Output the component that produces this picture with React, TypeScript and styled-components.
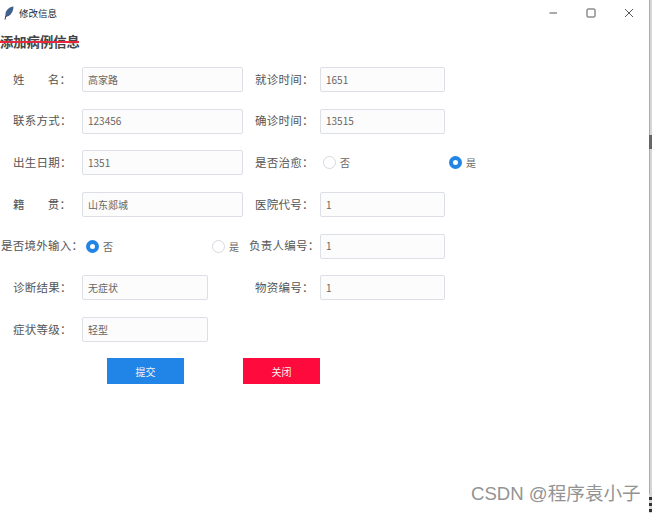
import React from 'react';
import styled, { createGlobalStyle } from 'styled-components';

const Global = createGlobalStyle`
  html, body { margin: 0; padding: 0; background: #fff; }
  body { width: 657px; height: 513px; overflow: hidden; font-family: "Noto Sans CJK SC", "Liberation Sans", sans-serif; }
`;

const Page = styled.div`
  position: relative;
  width: 657px;
  height: 513px;
  display: flex;
  background: #fff;
  overflow: hidden;
`;
const Win = styled.div`
  width: 649px;
  display: flex;
  flex-direction: column;
`;
const Edge = styled.div`
  width: 3px;
  box-sizing: border-box;
  background: #d6d6d6;
  border-left: 1px solid #aaa;
  display: flex;
  flex-direction: column;
  padding-top: 135px;
`;
const EdgeThumb = styled.div`
  height: 14px;
  margin-left: -1px;
  background: #666;
`;
const EdgeFoot = styled.div`
  height: 19px;
  margin-top: auto;
  margin-left: -1px;
  background: repeating-linear-gradient(#d6d6d6 0 3px, #333 3px 6px);
`;
const TitleBar = styled.div`
  height: 26px;
  display: flex;
  align-items: center;
  padding-left: 4px;
  color: #222;
  font-size: 9.5px;
`;
const TitleText = styled.span`
  margin-left: 5px;
`;
const WinButtons = styled.div`
  margin-left: auto;
  display: flex;
  gap: 28px;
  padding-right: 15px;
  align-items: center;
`;
const Heading = styled.div`
  position: relative;
  width: 80px;
  height: 19px;
  margin-top: 6px;
  font-size: 13.3px;
  line-height: 19px;
  font-weight: 700;
  color: #444;
  white-space: nowrap;
`;
const Strike = styled.div`
  position: absolute;
  left: 0;
  top: 9px;
  width: 79px;
  height: 2px;
  background: #e8283c;
`;
const Form = styled.div`
  margin-top: 16px;
  display: flex;
  flex-direction: column;
  gap: 16.7px;
`;
const Row = styled.div`
  display: flex;
  align-items: center;
  height: 25px;
`;
const Label = styled.div<{ $w: number; $pad?: number }>`
  width: ${p => p.$w}px;
  padding-left: ${p => p.$pad ?? 0}px;
  padding-bottom: 2px;
  flex: none;
  box-sizing: border-box;
  font-size: 11.5px;
  letter-spacing: 0.25px;
  color: #555;
  white-space: nowrap;
  display: flex;
`;
const LabelGap = styled.span`
  margin-left: 23px;
`;
const Field = styled.div<{ $w: number }>`
  width: ${p => p.$w}px;
  height: 25px;
  flex: none;
  box-sizing: border-box;
  border: 1px solid #dcdfe6;
  border-radius: 2px;
  background: #fcfcfd;
  padding: 0 0 1px 5px;
  display: flex;
  align-items: center;
  font-size: 10px;
  color: #6b6560;
`;
const Slot = styled.div<{ $w: number }>`
  width: ${p => p.$w}px;
  flex: none;
  display: flex;
  align-items: center;
`;
const RadioDot = styled.span<{ $on?: boolean }>`
  width: 13px;
  height: 13px;
  flex: none;
  box-sizing: border-box;
  border-radius: 50%;
  background: #fff;
  border: ${p => (p.$on ? '4px solid #2185e8' : '1px solid #d5d8de')};
`;
const RadioText = styled.span`
  margin-left: 4px;
  font-size: 10px;
  color: #666;
`;
const Actions = styled.div`
  display: flex;
  padding-left: 107px;
  margin-top: 16px;
  gap: 59px;
`;
const Btn = styled.div<{ $bg: string }>`
  width: 77px;
  height: 26px;
  background: ${p => p.$bg};
  color: #f4f4f4;
  font-size: 10px;
  display: flex;
  align-items: center;
  justify-content: center;
`;
const Watermark = styled.div`
  position: absolute;
  left: 471px;
  top: 482px;
  font-family: "Liberation Sans", "Noto Sans CJK SC", sans-serif;
  font-size: 18.6px;
  line-height: 24px;
  color: #939393;
  white-space: nowrap;
`;

const Radio = ({ on, text, w }: { on?: boolean; text: string; w: number }) => (
  <Slot $w={w}>
    <RadioDot $on={on} />
    <RadioText>{text}</RadioText>
  </Slot>
);

const Feather = () => (
  <svg width="10" height="14" viewBox="0 0 10 14" fill="none">
    <path d="M9.5 0.5C5 0.8 1.2 4.5 1.5 9L1.6 11L4.8 10C7.8 8 9.5 4.5 9.5 0.5Z" fill="#41618c" />
    <path d="M2 9.5L1 13.5" stroke="#223" strokeWidth="0.9" />
  </svg>
);

export default function App() {
  return (
    <Page>
      <Global />
      <Win>
        <TitleBar>
          <Feather />
          <TitleText>修改信息</TitleText>
          <WinButtons>
            <svg width="10" height="10" viewBox="0 0 10 10"><path d="M1.5 5H9" stroke="#555" strokeWidth="1" /></svg>
            <svg width="10" height="10" viewBox="0 0 10 10"><rect x="1" y="1" width="8" height="8" rx="0.8" fill="none" stroke="#555" strokeWidth="1" /></svg>
            <svg width="10" height="10" viewBox="0 0 10 10"><path d="M1 1L9 9M9 1L1 9" stroke="#444" strokeWidth="0.9" /></svg>
          </WinButtons>
        </TitleBar>
        <Heading>
          添加病例信息
          <Strike />
        </Heading>
        <Form>
          <Row>
            <Label $w={82} $pad={13}><span>姓</span><LabelGap>名：</LabelGap></Label>
            <Field $w={161}>高家路</Field>
            <Label $w={77} $pad={12}>就诊时间：</Label>
            <Field $w={125}>1651</Field>
          </Row>
          <Row>
            <Label $w={82} $pad={13}>联系方式：</Label>
            <Field $w={161}>123456</Field>
            <Label $w={77} $pad={12}>确诊时间：</Label>
            <Field $w={125}>13515</Field>
          </Row>
          <Row>
            <Label $w={82} $pad={13}>出生日期：</Label>
            <Field $w={161}>1351</Field>
            <Label $w={80} $pad={12}>是否治愈：</Label>
            <Radio w={126} text="否" />
            <Radio text="是" on w={60} />
          </Row>
          <Row>
            <Label $w={82} $pad={13}><span>籍</span><LabelGap>贯：</LabelGap></Label>
            <Field $w={161}>山东郯城</Field>
            <Label $w={77} $pad={12}>医院代号：</Label>
            <Field $w={125}>1</Field>
          </Row>
          <Row>
            <Label $w={86} $pad={1}>是否境外输入：</Label>
            <Radio w={126} text="否" on />
            <Radio w={37} text="是" />
            <Label $w={71}>负责人编号：</Label>
            <Field $w={125}>1</Field>
          </Row>
          <Row>
            <Label $w={82} $pad={13}>诊断结果：</Label>
            <Field $w={126}>无症状</Field>
            <Label $w={112} $pad={47}>物资编号：</Label>
            <Field $w={125}>1</Field>
          </Row>
          <Row>
            <Label $w={82} $pad={13}>症状等级：</Label>
            <Field $w={126}>轻型</Field>
          </Row>
        </Form>
        <Actions>
          <Btn $bg="#2185e8">提交</Btn>
          <Btn $bg="#ff0a3c">关闭</Btn>
        </Actions>
      </Win>
      <Edge><EdgeThumb /><EdgeFoot /></Edge>
      <Watermark>CSDN @程序袁小子</Watermark>
    </Page>
  );
}
